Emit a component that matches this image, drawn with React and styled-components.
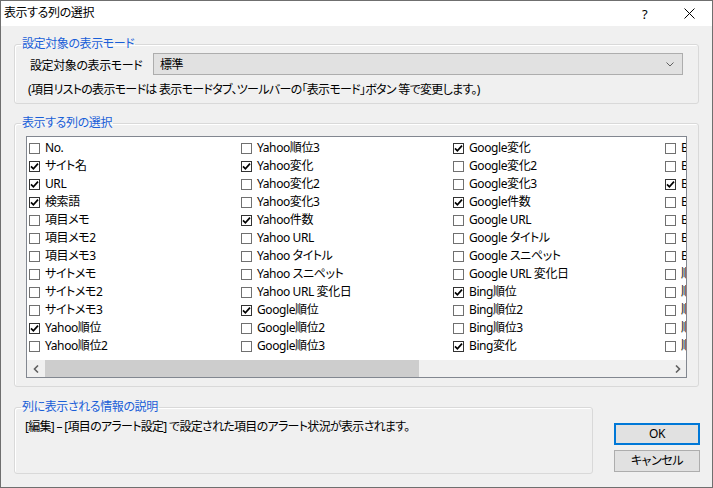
import styled, { createGlobalStyle } from "styled-components";

const GlobalStyle = createGlobalStyle`
  html, body {
    margin: 0;
    padding: 0;
    background: #f0f0f0;
  }
  * {
    box-sizing: border-box;
  }
`;

const columns = [
  ["No.", false], ["サイト名", true], ["URL", true], ["検索語", true],
  ["項目メモ", false], ["項目メモ2", false], ["項目メモ3", false], ["サイトメモ", false],
  ["サイトメモ2", false], ["サイトメモ3", false], ["Yahoo順位", true], ["Yahoo順位2", false],
  ["Yahoo順位3", false], ["Yahoo変化", true], ["Yahoo変化2", false], ["Yahoo変化3", false],
  ["Yahoo件数", true], ["Yahoo URL", false], ["Yahoo タイトル", false], ["Yahoo スニペット", false],
  ["Yahoo URL 変化日", false], ["Google順位", true], ["Google順位2", false], ["Google順位3", false],
  ["Google変化", true], ["Google変化2", false], ["Google変化3", false], ["Google件数", true],
  ["Google URL", false], ["Google タイトル", false], ["Google スニペット", false], ["Google URL 変化日", false],
  ["Bing順位", true], ["Bing順位2", false], ["Bing順位3", false], ["Bing変化", true],
  ["Bing変化2", false], ["Bing変化3", false], ["Bing件数", true], ["Bing URL", false],
  ["Bing タイトル", false], ["Bing スニペット", false], ["Bing URL 変化日", false], ["順位変動", false],
  ["順位変動2", false], ["順位変動3", false], ["順位履歴", false], ["順位履歴2", false],
];

const Window = styled.div`
  width: 713px;
  height: 488px;
  border: 1px solid #6f6f6f;
  background: #f0f0f0;
  display: flex;
  flex-direction: column;
  font-family: "Noto Sans", "Noto Sans CJK JP", sans-serif;
  font-feature-settings: "palt";
  font-size: 12px;
  letter-spacing: -0.4px;
  color: #000;
  overflow: hidden;
`;

const TitleBar = styled.div`
  height: 25px;
  background: #fff;
  display: flex;
  align-items: center;
  flex-shrink: 0;
`;

const Title = styled.div`
  flex: 1;
  padding-left: 3px;
  line-height: 16px;
  margin-top: -1px;
`;

const TitleButton = styled.div`
  width: 45px;
  height: 25px;
  display: flex;
  align-items: center;
  justify-content: center;
  font-family: "Noto Sans", sans-serif;
  font-size: 13px;
`;

const Body = styled.div`
  flex: 1;
  padding: 11px 13px 0 13px;
  display: flex;
  flex-direction: column;
`;

const Group = styled.fieldset`
  margin: 0;
  margin-top: ${(p) => p.$gap || 0}px;
  padding: 0;
  border: 1px solid #d9d9d9;
  border-radius: 3px;
  box-shadow: inset 1px 1px 0 #fff;
  min-width: 0;
  width: ${(p) => (p.$width ? p.$width + "px" : "auto")};
  height: ${(p) => (p.$height ? p.$height + "px" : "auto")};
`;

const Legend = styled.legend`
  margin-left: 6px;
  padding: 0 1px;
  line-height: 14px;
  color: #1a5fd8;
`;

const GroupBody = styled.div`
  padding: 0 ${(p) => p.$padX}px ${(p) => p.$padBottom || 0}px;
`;

const ModeRow = styled.div`
  display: flex;
  align-items: center;
  margin-top: 2px;
`;

const ModeLabel = styled.div`
  width: 123px;
  padding-top: 1px;
`;

const Select = styled.div`
  flex: 1;
  height: 22px;
  background: #e1e1e1;
  border: 1px solid #adadad;
  display: flex;
  align-items: center;
  justify-content: space-between;
  padding: 0 8px 0 6px;
`;

const Note = styled.div`
  margin-top: 7px;
  line-height: 16px;
  margin-left: -2px;
  letter-spacing: -0.7px;
`;

const ListBox = styled.div`
  margin-top: 6px;
  height: 242px;
  border: 1px solid #828790;
  background: #fff;
  display: flex;
  flex-direction: column;
  overflow: hidden;
`;

const ItemGrid = styled.div`
  flex: 1;
  padding: 2px 0 0 2px;
  display: grid;
  grid-auto-flow: column;
  grid-template-rows: repeat(12, 18px);
  grid-auto-columns: 212px;
  overflow: hidden;
`;

const Item = styled.div`
  display: flex;
  align-items: center;
  white-space: nowrap;
`;

const Box = styled.span`
  width: 11px;
  height: 11px;
  border: 1px solid ${(p) => (p.$checked ? "#333" : "#707070")};
  background: #fff;
  margin-right: 5px;
  display: flex;
  align-items: center;
  justify-content: center;
  flex-shrink: 0;
`;

const ItemText = styled.span`
  line-height: 16px;
`;

const ScrollBar = styled.div`
  height: 17px;
  background: #f0f0f0;
  display: flex;
  flex-shrink: 0;
`;

const ScrollArrow = styled.div`
  width: 17px;
  display: flex;
  align-items: center;
  justify-content: center;
`;

const ScrollTrack = styled.div`
  flex: 1;
  padding-left: 1px;
`;

const Thumb = styled.div`
  height: 100%;
  background: #cdcdcd;
`;

const BottomRow = styled.div`
  display: flex;
  justify-content: space-between;
  margin-top: 13px;
`;

const Description = styled.div`
  margin-top: 5px;
  line-height: 16px;
  letter-spacing: -0.7px;
`;

const ButtonColumn = styled.div`
  display: flex;
  flex-direction: column;
  gap: 5px;
  padding-top: 23px;
  margin-right: -1px;
`;

const Button = styled.div`
  width: 86px;
  height: 22px;
  background: #e1e1e1;
  border: ${(p) => (p.$default ? "2px solid #0078d7" : "1px solid #adadad")};
  display: flex;
  align-items: center;
  justify-content: center;
  line-height: 16px;
`;

function Check({ checked }) {
  return (
    <Box $checked={checked}>
      {checked && (
        <svg width="9" height="9" viewBox="0 0 9 9">
          <path d="M1 4.3 L3.4 6.8 L8 1.6" fill="none" stroke="#000" strokeWidth="1.7" />
        </svg>
      )}
    </Box>
  );
}

export default function App() {
  return (
    <>
      <GlobalStyle />
      <Window>
        <TitleBar>
          <Title>表示する列の選択</Title>
          <TitleButton>?</TitleButton>
          <TitleButton>
            <svg width="11" height="11" viewBox="0 0 11 11">
              <path d="M0.5 0.5 L10.5 10.5 M10.5 0.5 L0.5 10.5" stroke="#000" strokeWidth="1" />
            </svg>
          </TitleButton>
        </TitleBar>
        <Body>
          <Group>
            <Legend>設定対象の表示モード</Legend>
            <GroupBody $padX={15} $padBottom={5}>
              <ModeRow>
                <ModeLabel>設定対象の表示モード</ModeLabel>
                <Select>
                  <span>標準</span>
                  <svg width="8" height="5" viewBox="0 0 8 5">
                    <path d="M0.5 0.5 L4 4 L7.5 0.5" fill="none" stroke="#606060" strokeWidth="1" />
                  </svg>
                </Select>
              </ModeRow>
              <Note>(項目リストの表示モードは 表示モードタブ、ツールバーの「表示モード」ボタン 等で変更します。)</Note>
            </GroupBody>
          </Group>

          <Group $gap={12}>
            <Legend>表示する列の選択</Legend>
            <GroupBody $padX={11} $padBottom={8}>
              <ListBox>
                <ItemGrid>
                  {columns.map(([name, checked]) => (
                    <Item key={name}>
                      <Check checked={checked} />
                      <ItemText>{name}</ItemText>
                    </Item>
                  ))}
                </ItemGrid>
                <ScrollBar>
                  <ScrollArrow>
                    <svg width="6" height="8" viewBox="0 0 6 8">
                      <path d="M5 0.5 L1.5 4 L5 7.5" fill="none" stroke="#606060" strokeWidth="1.6" />
                    </svg>
                  </ScrollArrow>
                  <ScrollTrack>
                    <Thumb style={{ width: "60%" }} />
                  </ScrollTrack>
                  <ScrollArrow>
                    <svg width="6" height="8" viewBox="0 0 6 8">
                      <path d="M1 0.5 L4.5 4 L1 7.5" fill="none" stroke="#606060" strokeWidth="1.6" />
                    </svg>
                  </ScrollArrow>
                </ScrollBar>
              </ListBox>
            </GroupBody>
          </Group>

          <BottomRow>
            <Group $width={579} $height={74}>
              <Legend>列に表示される情報の説明</Legend>
              <GroupBody $padX={10}>
                <Description>[編集] – [項目のアラート設定] で設定された項目のアラート状況が表示されます。</Description>
              </GroupBody>
            </Group>
            <ButtonColumn>
              <Button $default>OK</Button>
              <Button>キャンセル</Button>
            </ButtonColumn>
          </BottomRow>
        </Body>
      </Window>
    </>
  );
}
